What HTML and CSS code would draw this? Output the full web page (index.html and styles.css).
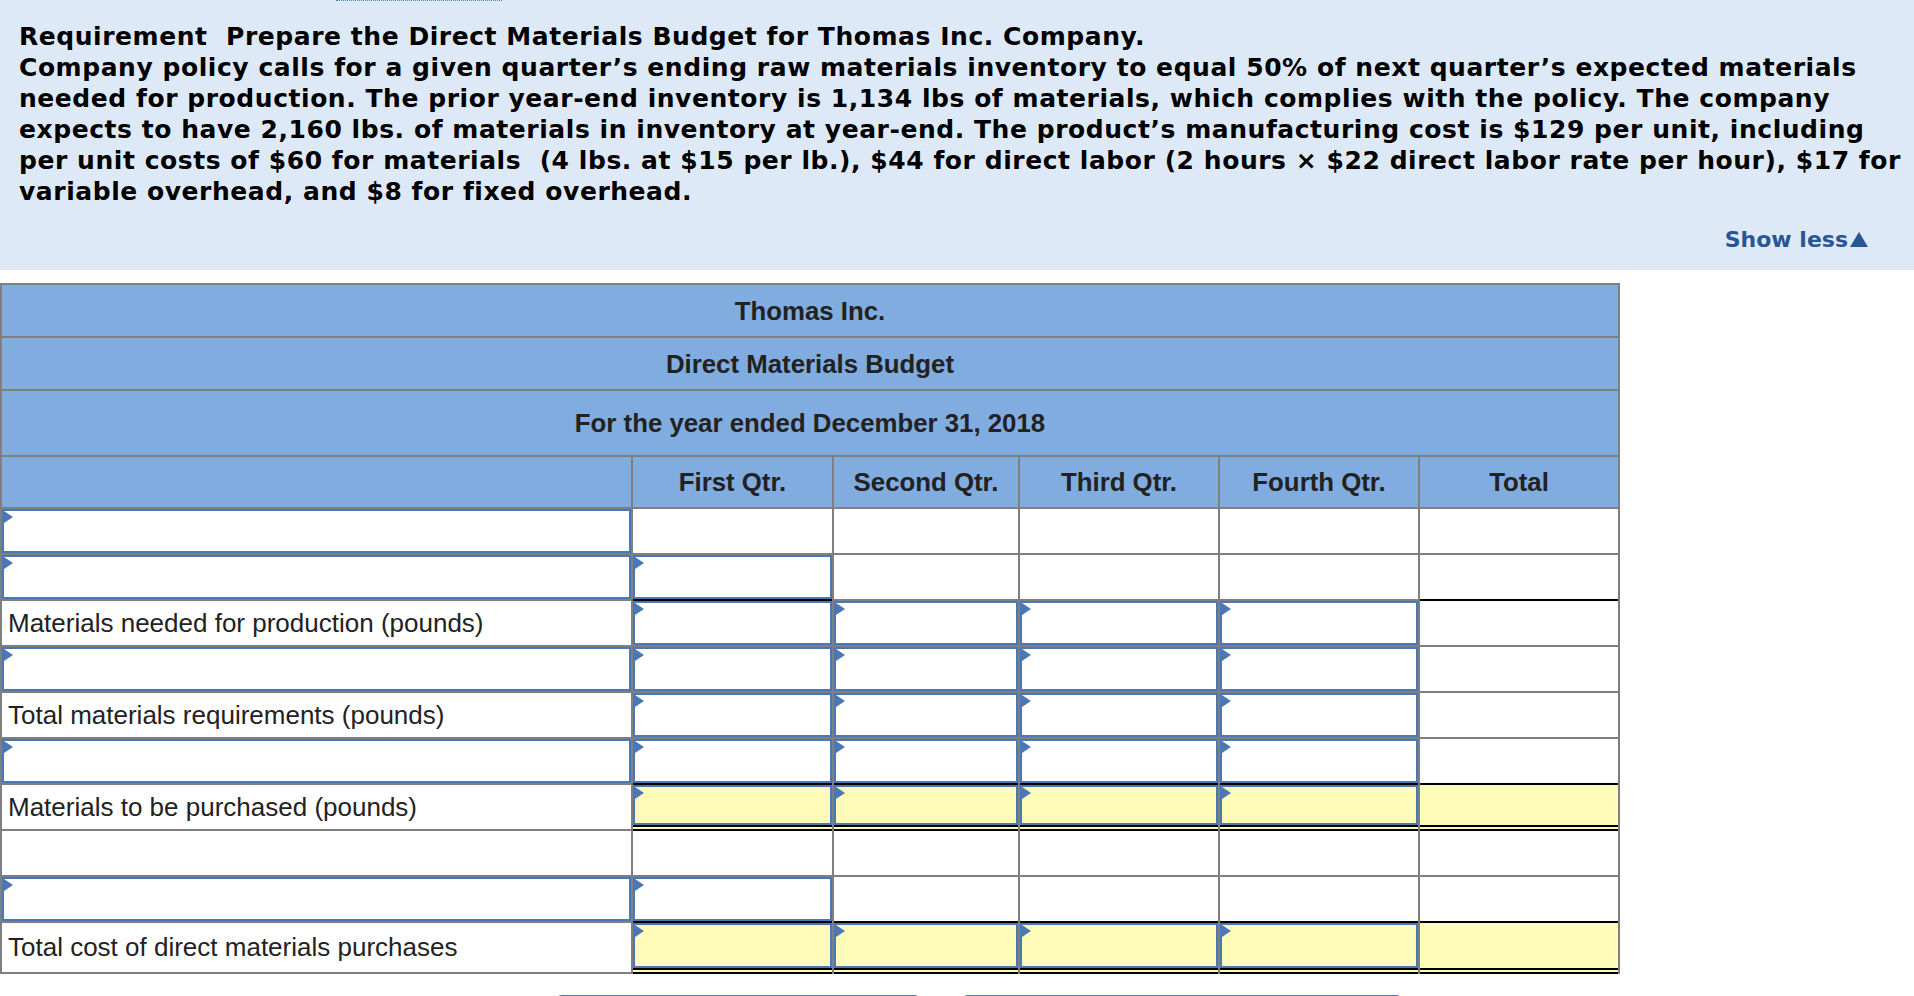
FILE: index.html
```html
<!DOCTYPE html>
<html lang="en">
<head>
<meta charset="utf-8">
<title>Direct Materials Budget</title>
<link rel="stylesheet" href="styles.css">
</head>
<body>
<section class="req">
  <div class="focus-mark"></div>
  <p class="req-text"><span class="req-title">Requirement</span>&nbsp; Prepare the Direct Materials Budget for Thomas Inc. Company.<br>Company policy calls for a given quarter’s ending raw materials inventory to equal 50% of next quarter’s expected materials<br>needed for production. The prior year-end inventory is 1,134 lbs of materials, which complies with the policy. The company<br>expects to have 2,160 lbs. of materials in inventory at year-end. The product’s manufacturing cost is $129 per unit, including<br>per unit costs of $60 for materials&nbsp; (4 lbs. at $15 per lb.), $44 for direct labor (2 hours × $22 direct labor rate per hour), $17 for<br>variable overhead, and $8 for fixed overhead.</p>
  <div class="toggle-row"><a class="toggle" href="#">Show less<span class="tri"></span></a></div>
</section>

<div class="budget">
  <div class="title">Thomas Inc.</div>
  <div class="title">Direct Materials Budget</div>
  <div class="title">For the year ended December 31, 2018</div>
  <div class="hd"></div>
  <div class="hd">First Qtr.</div>
  <div class="hd">Second Qtr.</div>
  <div class="hd">Third Qtr.</div>
  <div class="hd">Fourth Qtr.</div>
  <div class="hd">Total</div>

  <!-- row 1 -->
  <div class="f"></div>
  <div class="c"></div><div class="c"></div><div class="c"></div><div class="c"></div><div class="c"></div>

  <!-- row 2 -->
  <div class="f"></div>
  <div class="f r"></div><div class="c"></div><div class="c"></div><div class="c"></div><div class="c r"></div>

  <!-- row 3 -->
  <div class="c lbl">Materials needed for production (pounds)</div>
  <div class="f"></div><div class="f"></div><div class="f"></div><div class="f"></div><div class="c"></div>

  <!-- row 4 -->
  <div class="f"></div>
  <div class="f"></div><div class="f"></div><div class="f"></div><div class="f"></div><div class="c"></div>

  <!-- row 5 -->
  <div class="c lbl">Total materials requirements (pounds)</div>
  <div class="f"></div><div class="f"></div><div class="f"></div><div class="f"></div><div class="c"></div>

  <!-- row 6 -->
  <div class="f"></div>
  <div class="f r"></div><div class="f r"></div><div class="f r"></div><div class="f r"></div><div class="c r"></div>

  <!-- row 7 -->
  <div class="c lbl">Materials to be purchased (pounds)</div>
  <div class="s"><div class="f"></div></div>
  <div class="s"><div class="f"></div></div>
  <div class="s"><div class="f"></div></div>
  <div class="s"><div class="f"></div></div>
  <div class="s"></div>

  <!-- row 8 -->
  <div class="c"></div>
  <div class="c"></div><div class="c"></div><div class="c"></div><div class="c"></div><div class="c"></div>

  <!-- row 9 -->
  <div class="f"></div>
  <div class="f r"></div><div class="c r"></div><div class="c r"></div><div class="c r"></div><div class="c r"></div>

  <!-- row 10 -->
  <div class="c lbl">Total cost of direct materials purchases</div>
  <div class="s"><div class="f"></div></div>
  <div class="s"><div class="f"></div></div>
  <div class="s"><div class="f"></div></div>
  <div class="s"><div class="f"></div></div>
  <div class="s"></div>
</div>

<div class="actions">
  <div class="btn btn-a"></div>
  <div class="btn btn-b"></div>
</div>
</body>
</html>
```

FILE: styles.css
```css
html {
  overflow: hidden;
}
html, body {
  margin: 0;
  padding: 0;
  background: #ffffff;
}
body {
  font-family: "Liberation Sans", Arial, sans-serif;
  color: #222222;
}

/* ---------- requirement panel ---------- */
.req {
  background: #dde9f7;
  height: 270px;
  box-sizing: border-box;
  padding: 0 46px 0 19px;
}
.focus-mark {
  margin-left: 317px;
  width: 166px;
  height: 0;
  border-top: 1px dotted #4a7ebf;
}
.req-text {
  margin: 20px 0 0;
  font-family: "DejaVu Sans", Verdana, sans-serif;
  font-weight: bold;
  font-size: 25px;
  letter-spacing: 0.55px;
  line-height: 31px;
  color: #000000;
  white-space: nowrap;
}
.toggle-row {
  display: flex;
  justify-content: flex-end;
  margin-top: 17px;
  line-height: 31px;
}
.toggle {
  display: inline-flex;
  align-items: baseline;
  font-family: "DejaVu Sans", Verdana, sans-serif;
  font-weight: bold;
  font-size: 22px;
  color: #2a5593;
  text-decoration: none;
}
.tri {
  display: inline-block;
  width: 0;
  height: 0;
  margin-left: 2px;
  border-left: 9px solid transparent;
  border-right: 9px solid transparent;
  border-bottom: 15px solid #2a5593;
}

/* ---------- budget grid ---------- */
.budget {
  margin-top: 13px;
  width: 1620px;
  box-sizing: border-box;
  display: grid;
  grid-template-columns: 629px 199px 184px 198px 198px 198px;
  grid-template-rows: 51px 51px 64px 50px repeat(9, 44px) 49px;
  gap: 2px;
  padding: 2px;
  background: #7f7f7f;
  font-size: 26px;
  color: #222222;
}
.title {
  grid-column: 1 / -1;
  background: #80acdf;
  display: flex;
  align-items: center;
  justify-content: center;
  padding-top: 1px;
  font-size: 25.8px;
  font-weight: bold;
}
.hd {
  background: #80acdf;
  display: flex;
  align-items: center;
  justify-content: center;
  font-size: 25.8px;
  font-weight: bold;
}
.c {
  background: #ffffff;
}
.lbl {
  display: flex;
  align-items: center;
  padding-left: 6px;
  white-space: nowrap;
}
.f {
  position: relative;
  box-sizing: border-box;
  border: 2px solid #4a77b5;
  background: #ffffff;
}
.f::before {
  content: "";
  position: absolute;
  top: 0;
  left: 0;
  width: 0;
  height: 0;
  border-left: 9px solid #4a77b5;
  border-top: 6px solid transparent;
  border-bottom: 6px solid transparent;
}
.r {
  box-shadow: 0 2px 0 #000000;
}
.s {
  display: flex;
  flex-direction: column;
  padding-bottom: 4px;
  background-color: #fefcb8;
  background-image: linear-gradient(#000000, #000000);
  background-repeat: no-repeat;
  background-size: 100% 2px;
  background-position: left 0 bottom 2px;
  box-shadow: 0 2px 0 #000000;
}
.s .f {
  flex: 1;
  background: transparent;
}

/* ---------- buttons peeking at the bottom ---------- */
.actions {
  display: flex;
  gap: 44px;
  margin: 21px 0 0 557px;
}
.btn {
  height: 40px;
  box-sizing: border-box;
  border: 1px solid #4a77b5;
  border-radius: 4px;
}
.btn-a {
  width: 362px;
}
.btn-b {
  width: 438px;
}
```
